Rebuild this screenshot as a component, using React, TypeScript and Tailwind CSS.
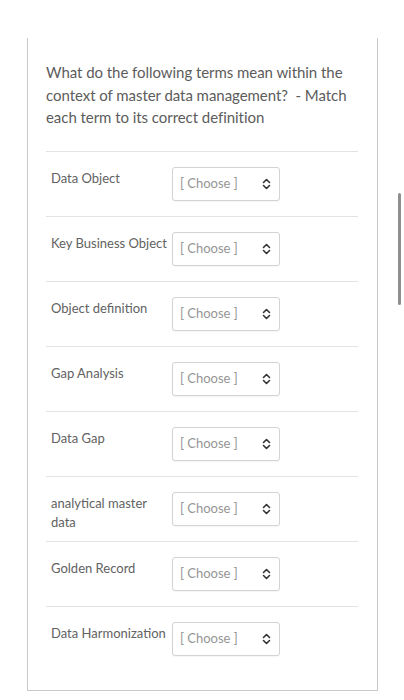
import React from 'react';

const TERMS = [
  'Data Object',
  'Key Business Object',
  'Object definition',
  'Gap Analysis',
  'Data Gap',
  'analytical master data',
  'Golden Record',
  'Data Harmonization',
];

const ChooseSelect: React.FC = () => (
  <div className="flex h-[34px] w-[108px] shrink-0 items-center justify-between rounded-[3px] border border-[#d3d3d3] bg-white pl-[7px] pr-[8px] text-[13px] text-[#959595] shadow-[0_1px_1px_rgba(0,0,0,0.04)]">
    <span>[ Choose ]</span>
    <svg width="9" height="12" viewBox="0 0 9 12" fill="none" stroke="#333" strokeWidth="1.6" strokeLinecap="round" strokeLinejoin="round">
      <path d="M1.5 4.5 L4.5 1.5 L7.5 4.5" />
      <path d="M1.5 7.5 L4.5 10.5 L7.5 7.5" />
    </svg>
  </div>
);

export default function App() {
  return (
    <div className="relative h-[700px] w-[404px] overflow-hidden bg-white font-['Lato','Noto_Sans',sans-serif]">
      <div className="ml-[27px] mt-[38px] h-[653px] w-[351px] border-x border-b border-[#c9c9c9] pl-[18px] pr-[19px] pt-[23px]">
        <p className="text-[15px] leading-[22.5px] tracking-[-0.05px] text-[#5c5c5c]">
          What do the following terms mean within the context of master data management?&nbsp; - Match each term to its correct definition
        </p>
        <div className="mt-[22px]">
          {TERMS.map((t) => (
            <div key={t} className="flex h-[65px] items-start border-t border-[#e3e3e3] pl-[5px] pt-[15px]">
              <div className="w-[121px] pt-[2px] text-[13px] leading-[19px] text-[#626262]">{t}</div>
              <ChooseSelect />
            </div>
          ))}
        </div>
      </div>
      <div className="absolute left-[398px] top-[193px] h-[112px] w-[3px] rounded-full bg-[#8f8f8f]" />
    </div>
  );
}
